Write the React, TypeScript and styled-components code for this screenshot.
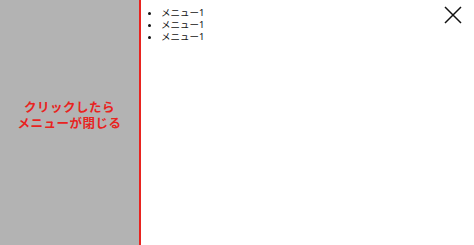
import React from 'react'
import styled, { createGlobalStyle } from 'styled-components'

const font = `'Noto Sans', 'Noto Sans CJK JP', 'DejaVu Sans', sans-serif`

const Global = createGlobalStyle`
	html, body {
		margin: 0;
		padding: 0;
		height: 100%;
		background: #fff;
		font-family: ${font};
	}
	#root {
		height: 100%;
	}
`

const Layout = styled.div`
	display: flex;
	height: 100vh;
	position: relative;
	font-family: ${font};
`

const Overlay = styled.div`
	width: 139px;
	flex: none;
	padding-bottom: 14px;
	background: #b3b3b3;
	border-right: 2px solid #e8231f;
	display: flex;
	align-items: center;
	justify-content: center;
	text-align: center;
	color: #e8231f;
	font-family: ${font};
	font-weight: bold;
	font-size: 12.5px;
	line-height: 16px;
	letter-spacing: 0.5px;
	cursor: pointer;
`

const Menu = styled.ul`
	flex: auto;
	margin: 7px 0 0;
	padding-left: 20px;
	font-family: ${font};
	font-size: 9.5px;
	line-height: 12px;
	color: #111;
`

const CloseButton = styled.button`
	position: absolute;
	top: 5px;
	right: 11px;
	width: 20px;
	height: 20px;
	padding: 0;
	border: none;
	background: none;
	cursor: pointer;
`

const App = () => (
	<Layout>
		<Global />
		<Overlay>
			クリックしたら
			<br />
			メニューが閉じる
		</Overlay>
		<Menu>
			<li>メニュー1</li>
			<li>メニュー1</li>
			<li>メニュー1</li>
		</Menu>
		<CloseButton aria-label="close">
			<svg width="20" height="20" viewBox="0 0 20 20">
				<path d="M2 2L18 18M18 2L2 18" stroke="#111" strokeWidth="1.5" />
			</svg>
		</CloseButton>
	</Layout>
)

export default App
